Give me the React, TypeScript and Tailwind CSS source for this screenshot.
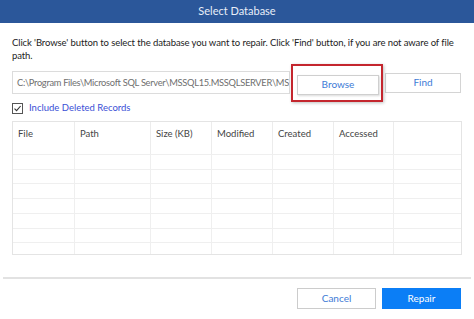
const columns = [
  { name: "File", width: "w-[62px]" },
  { name: "Path", width: "w-[76px]" },
  { name: "Size (KB)", width: "w-[61px]" },
  { name: "Modified", width: "w-[61px]" },
  { name: "Created", width: "w-[61px]" },
  { name: "Accessed", width: "w-[60px]" },
  { name: "", width: "flex-1" },
];

const rowHeights = ["h-[15px]", "h-[14px]", "h-[15px]", "h-[15px]", "h-[15px]", "h-[14px]", "h-[12px]"];

export default function App() {
  return (
    <div className="w-[474px] h-[319px] bg-white overflow-hidden font-['Lato',sans-serif] text-[#333333]">
      <div className="h-[23px] bg-[#2b579a] flex items-center justify-center text-[11px] text-[#e8eef8]">
        Select Database
      </div>

      <div className="px-[12px]">
        <p className="pt-[13px] text-[9.5px] leading-[13px] tracking-[-0.1px] text-[#222]">
          Click 'Browse' button to select the database you want to repair. Click 'Find' button, if you are not aware of file path.
        </p>

        <div className="mt-[9px] flex items-center h-[23px]">
          <div className="w-[278px] h-[23px] border border-[#dcdcdc] flex items-center pl-[4px] text-[9.3px] tracking-[-0.3px] text-[#6f6f6f] whitespace-nowrap overflow-hidden">
            C:\Program Files\Microsoft SQL Server\MSSQL15.MSSQLSERVER\MS
          </div>
          <div className="relative ml-[7px]">
            <button className="w-[82px] h-[20px] border border-[#cfcfcf] bg-white text-[10px] text-[#3d7bd6] shadow-[1px_1px_2px_rgba(0,0,0,0.15)]">
              Browse
            </button>
            <div className="absolute -left-[6px] -right-[4px] -top-[6px] -bottom-[7px] border-2 border-[#c4262e] shadow-[1px_1px_3px_rgba(0,0,0,0.25)]" />
          </div>
          <button className="ml-[6px] w-[76px] h-[20px] border border-[#d4d4d4] bg-white text-[10px] text-[#3d7bd6]">
            Find
          </button>
        </div>

        <div className="mt-[9px] flex items-center h-[11px]">
          <div className="w-[11px] h-[11px] border border-[#555] flex items-center justify-center">
            <svg width="9" height="9" viewBox="0 0 9 9">
              <path d="M1.5 4.6 L3.6 6.7 L7.6 2" fill="none" stroke="#333" strokeWidth="1.1" />
            </svg>
          </div>
          <span className="ml-[6px] text-[9.5px] text-[#3a4fd6]">Include Deleted Records</span>
        </div>

        <div className="mt-[7px] border border-[#e4e4e4]">
          <div className="flex h-[32px]">
            {columns.map((c, i) => (
              <div
                key={i}
                className={`${c.width} ${i < columns.length - 1 ? "border-r border-[#ececec]" : ""} pl-[5px] pt-[5px] text-[9.5px] text-[#444]`}
              >
                {c.name}
              </div>
            ))}
          </div>
          {rowHeights.map((h, r) => (
            <div key={r} className={`flex ${h} border-t border-[#efefef]`}>
              {columns.map((c, i) => (
                <div key={i} className={`${c.width} ${i < columns.length - 1 ? "border-r border-[#efefef]" : ""}`} />
              ))}
            </div>
          ))}
        </div>
      </div>

      <div className="mt-[22px] mx-[3px] h-[2px] bg-[#e2e2e2]" />

      <div className="mt-[9px] px-[13px] flex justify-end gap-[6px]">
        <button className="w-[79px] h-[21px] border border-[#cccccc] bg-white text-[10px] text-[#3d7bd6]">
          Cancel
        </button>
        <button className="w-[79px] h-[21px] bg-[#0b7ef6] text-[10px] text-white">Repair</button>
      </div>
    </div>
  );
}
